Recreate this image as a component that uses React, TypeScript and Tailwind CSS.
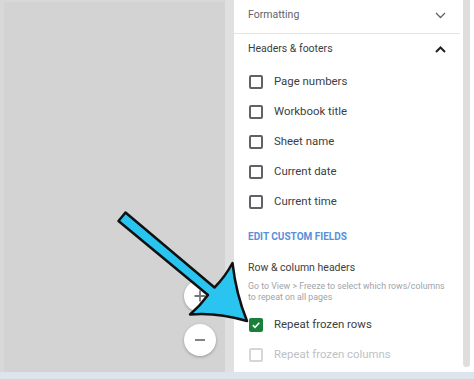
import React from "react";

function Box({ state }: { state: "off" | "on" | "disabled" }) {
  if (state === "on") {
    return (
      <div className="w-[14px] h-[14px] rounded-[2px] bg-[#188038] flex items-center justify-center ml-[1px] shrink-0">
        <svg width="10" height="10" viewBox="0 0 10 10">
          <polyline points="1.8,5.2 4,7.3 8.3,2.8" fill="none" stroke="#ffffff" strokeWidth="1.6" />
        </svg>
      </div>
    );
  }
  return (
    <div
      className={
        state === "disabled"
          ? "w-[14px] h-[14px] rounded-[2px] border-2 border-[#d4d6d8] ml-[1px] shrink-0"
          : "w-[14px] h-[14px] rounded-[2px] border-2 border-[#5f6368] ml-[1px] shrink-0"
      }
    />
  );
}

function Row({ label, state = "off" }: { label: string; state?: "off" | "on" | "disabled" }) {
  return (
    <div className="h-[30px] flex items-center gap-[11px]">
      <Box state={state} />
      <span
        className={
          state === "disabled"
            ? "text-[11.4px] text-[#bdc1c6] leading-none"
            : "text-[11.4px] text-[#3c4043] leading-none"
        }
      >
        {label}
      </span>
    </div>
  );
}

export default function App() {
  return (
    <div
      className="relative w-[474px] h-[379px] overflow-hidden bg-white"
      style={{ fontFamily: "Roboto, 'Liberation Sans', sans-serif" }}
    >
      <div className="flex h-[372px]">
        <div className="relative w-[225px] h-full bg-[#d3d3d3] border-l-[4px] border-t-[2px] border-[#d8d8d8]">
          <div className="absolute left-[180px] top-[278px] flex flex-col gap-[12px]">
            <div className="w-[32px] h-[32px] rounded-full bg-white shadow-[0_1px_3px_rgba(0,0,0,0.3)] flex items-center justify-center">
              <svg width="14" height="14" viewBox="0 0 14 14">
                <path d="M7 1.5V12.5M1.5 7H12.5" stroke="#757575" strokeWidth="1.8" />
              </svg>
            </div>
            <div className="w-[32px] h-[32px] rounded-full bg-white shadow-[0_1px_3px_rgba(0,0,0,0.3)] flex items-center justify-center">
              <svg width="14" height="14" viewBox="0 0 14 14">
                <path d="M2 7H12" stroke="#757575" strokeWidth="1.8" />
              </svg>
            </div>
          </div>
        </div>
        <div className="w-[9px] h-full bg-[#e0e0e0]" />
        <div className="w-[228px] h-full bg-white flex flex-col">
          <div className="h-[33px] pb-[3px] pl-[14px] pr-[16px] flex items-center justify-between">
            <span className="text-[10.5px] text-[#5f6368]">Formatting</span>
            <svg width="11" height="7" viewBox="0 0 11 7">
              <polyline points="1,1 5.5,5.5 10,1" fill="none" stroke="#5f6368" strokeWidth="1.3" />
            </svg>
          </div>
          <div className="h-px bg-[#e3e3e3] mr-[2px]" />
          <div className="h-[30px] pl-[14px] pr-[16px] flex items-center justify-between">
            <span className="text-[10.5px] text-[#3c4043]">Headers &amp; footers</span>
            <svg width="11" height="7" viewBox="0 0 11 7">
              <polyline points="1,6 5.5,1.5 10,6" fill="none" stroke="#202124" strokeWidth="2" />
            </svg>
          </div>
          <div className="mt-[3px] pl-[14px] flex flex-col">
            <Row label="Page numbers" />
            <Row label="Workbook title" />
            <Row label="Sheet name" />
            <Row label="Current date" />
            <Row label="Current time" />
            <div className="h-[38px] flex items-center">
              <span className="text-[10px] font-bold text-[#5a8fd8]">EDIT CUSTOM FIELDS</span>
            </div>
            <div className="h-[26px] flex items-center">
              <span className="text-[10.5px] text-[#3c4043]">Row &amp; column headers</span>
            </div>
            <div className="text-[8.8px] leading-[11px] text-[#a0a4a8]">
              <div>Go to View &gt; Freeze to select which rows/columns</div>
              <div>to repeat on all pages</div>
            </div>
            <div className="mt-[7px]">
              <Row label="Repeat frozen rows" state="on" />
              <Row label="Repeat frozen columns" state="disabled" />
            </div>
          </div>
        </div>
        <div className="w-[12px] h-full bg-white pl-[1px] pr-[4px]">
          <div className="w-[7px] h-[367px] bg-[#dedede] rounded-b-[4px]" />
        </div>
      </div>
      <div className="h-[7px] bg-[#dce5eb]" />
      <svg
        className="absolute left-0 top-0 pointer-events-none"
        width="474"
        height="379"
        viewBox="0 0 474 379"
      >
        <path
          d="M125.5 212.5 L214.5 287.5 Q225 277 232.5 263 Q236 294 247 321 Q216 312 190 314.5 Q200 306 208 295 L118.5 221 Z"
          fill="#29c4ef"
          stroke="#111111"
          strokeWidth="2.5"
          strokeLinejoin="round"
        />
      </svg>
    </div>
  );
}
